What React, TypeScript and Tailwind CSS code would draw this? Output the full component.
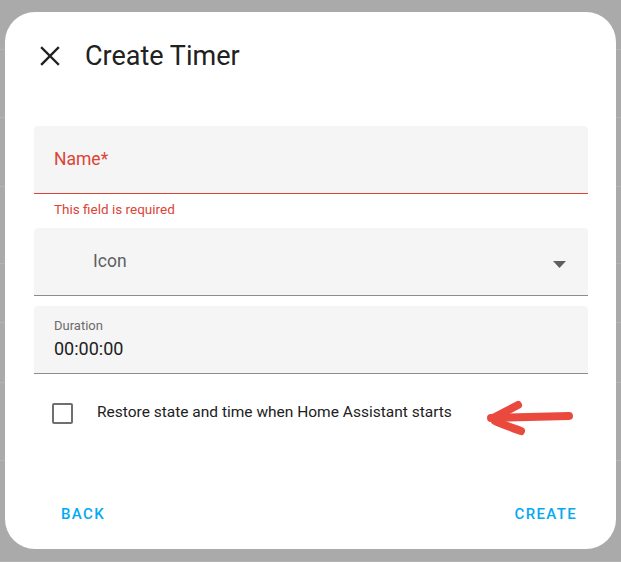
import React from "react";

const font = { fontFamily: "Roboto, 'Noto Sans', Arial, sans-serif" };

function Backdrop() {
  // faint list rows behind the scrim
  const rows = [50, 68, 69, 77, 59, 60, 78, 101];
  return (
    <div className="flex flex-col">
      {rows.map((h, i) => (
        <div key={i} className="border-b border-[#b4b4b4]" style={{ height: h }} />
      ))}
    </div>
  );
}

function CloseIcon() {
  return (
    <svg width="20" height="20" viewBox="0 0 20 20" className="text-[#212121]">
      <path d="M2 2 L18 18 M18 2 L2 18" stroke="currentColor" strokeWidth="2.4" strokeLinecap="square" />
    </svg>
  );
}

function HandArrow() {
  return (
    <svg width="96" height="44" viewBox="0 0 96 44" className="text-[#ea4a3e]">
      <g stroke="currentColor" strokeWidth="8" strokeLinecap="round" fill="none">
        <path d="M6 25 L84 23" />
        <path d="M8 25 L33 12" />
        <path d="M10 28 C18 32 28 35 36 38" />
      </g>
    </svg>
  );
}

export default function App() {
  return (
    <div className="relative h-[562px] w-[621px] overflow-hidden bg-[#aaaaaa]" style={font}>
      <Backdrop />

      <div className="absolute left-[5px] top-[12px] flex h-[537px] w-[611px] flex-col rounded-[30px] bg-white">
        <div className="flex items-center pl-[35px] pt-[25px]">
          <CloseIcon />
          <h1 className="ml-[25px] text-[27px] leading-[38px] text-[#212121]">Create Timer</h1>
        </div>

        <div className="mt-[51px] flex flex-col px-[29px] pr-[28px]">
          <div className="flex h-[68px] items-center rounded-t-[4px] border-b border-b-[#db4437] bg-[#f5f5f5] px-[20px]">
            <span className="text-[17.5px] text-[#db4437]">Name*</span>
          </div>
          <div className="px-[20px] pt-[6px] text-[13.5px] leading-[18px] text-[#db4437]">This field is required</div>

          <div className="mt-[10px] flex h-[68px] items-center justify-between rounded-t-[4px] border-b border-b-[#8c8c8c] bg-[#f5f5f5] pl-[59px] pr-[22px]">
            <span className="text-[17.5px] text-[#5f5f5f]">Icon</span>
            <svg width="13" height="7" viewBox="0 0 13 7" className="mt-[6px] text-[#5f5f5f]">
              <path d="M0 0 L13 0 L6.5 7 Z" fill="currentColor" />
            </svg>
          </div>

          <div className="mt-[10px] flex h-[68px] flex-col justify-center rounded-t-[4px] border-b border-b-[#8c8c8c] bg-[#f5f5f5] px-[20px]">
            <span className="text-[13px] leading-[16px] text-[#6b6b6b]">Duration</span>
            <span className="mt-[3px] text-[18px] leading-[24px] text-[#212121]">00:00:00</span>
          </div>

          <div className="mt-[15px] flex items-center">
            <div className="ml-[18px] h-[21px] w-[21px] rounded-[2px] border-2 border-[#6f6f6f]" />
            <span className="ml-[24px] text-[15.5px] text-[#212121]">Restore state and time when Home Assistant starts</span>
            <div className="ml-[33px] mt-[4px]">
              <HandArrow />
            </div>
          </div>
        </div>

        <div className="mt-auto flex items-center justify-between pb-[24px] pl-[56px] pr-[39px]">
          <button className="text-[15px] font-medium tracking-[0.09em] text-[#03a9f4]">BACK</button>
          <button className="text-[15px] font-medium tracking-[0.09em] text-[#03a9f4]">CREATE</button>
        </div>
      </div>
    </div>
  );
}
